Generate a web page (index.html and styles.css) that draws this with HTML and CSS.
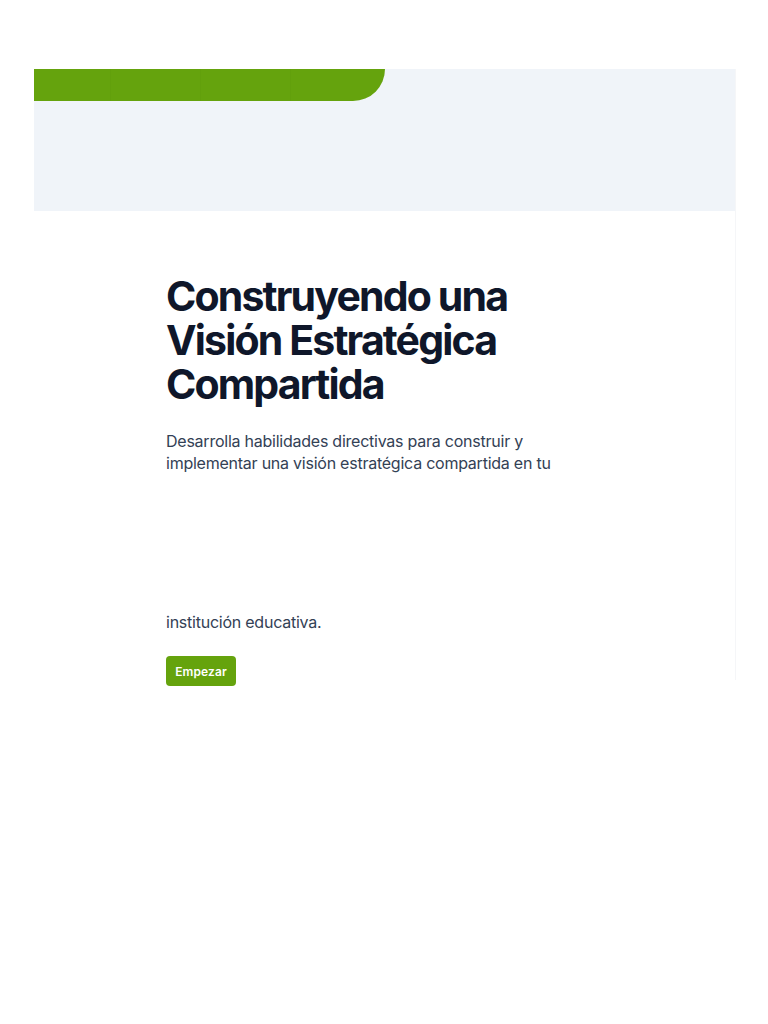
FILE: index.html
```html
<!DOCTYPE html>
<html lang="es">
<head>
<meta charset="utf-8">
<link rel="stylesheet" href="styles.css">
</head>
<body>
<div class="card">
  <div class="banner">
    <div class="progress">
      <span class="seg"></span><span class="seg"></span><span class="seg"></span><span class="seg last"></span>
    </div>
  </div>
  <div class="content">
    <h1 class="title">Construyendo una Visión Estratégica Compartida</h1>
    <p class="lead">Desarrolla habilidades directivas para construir y implementar una visión estratégica compartida en tu</p>
    <p class="lead tail">institución educativa.</p>
    <a class="btn" href="#">Empezar</a>
  </div>
</div>
</body>
</html>
```

FILE: styles.css
```css
html, body { margin: 0; padding: 0; background: #ffffff; }
body { font-family: Inter, "Noto Sans", sans-serif; padding-bottom: 340px; }
.card {
  margin: 69px 0 0 34px;
  width: 701px;
  height: 611px;
  border-right: 1px solid #f5f6f8;
}
.banner {
  height: 142px;
  background: #f0f4f9;
}
.progress {
  display: flex;
  width: 351px;
  height: 32px;
  background: #65a30d;
  border-bottom-right-radius: 32px;
  overflow: hidden;
}
.seg { flex: 0 0 89px; border-right: 1px solid #62a00c; }
.seg:first-child { flex-basis: 76px; }
.seg.last { flex: 1; border-right: none; }
.content {
  padding: 63px 0 0 132px;
}
.title {
  margin: 0;
  width: 420px;
  font-size: 41px;
  line-height: 44px;
  font-weight: 700;
  letter-spacing: -0.045em;
  color: #0f172a;
}
.lead {
  margin: 24px 0 0;
  width: 420px;
  font-size: 16px;
  line-height: 22px;
  color: #334155;
  letter-spacing: -0.015em;
}
.lead.tail { margin-top: 137px; }
.btn {
  margin-top: 23px;
  display: flex;
  align-items: center;
  justify-content: center;
  width: 70px;
  height: 30px;
  border-radius: 4px;
  background: #65a30d;
  color: #ffffff;
  text-decoration: none;
  font-size: 12px;
  font-weight: 600;
  letter-spacing: 0.01em;
}
```
